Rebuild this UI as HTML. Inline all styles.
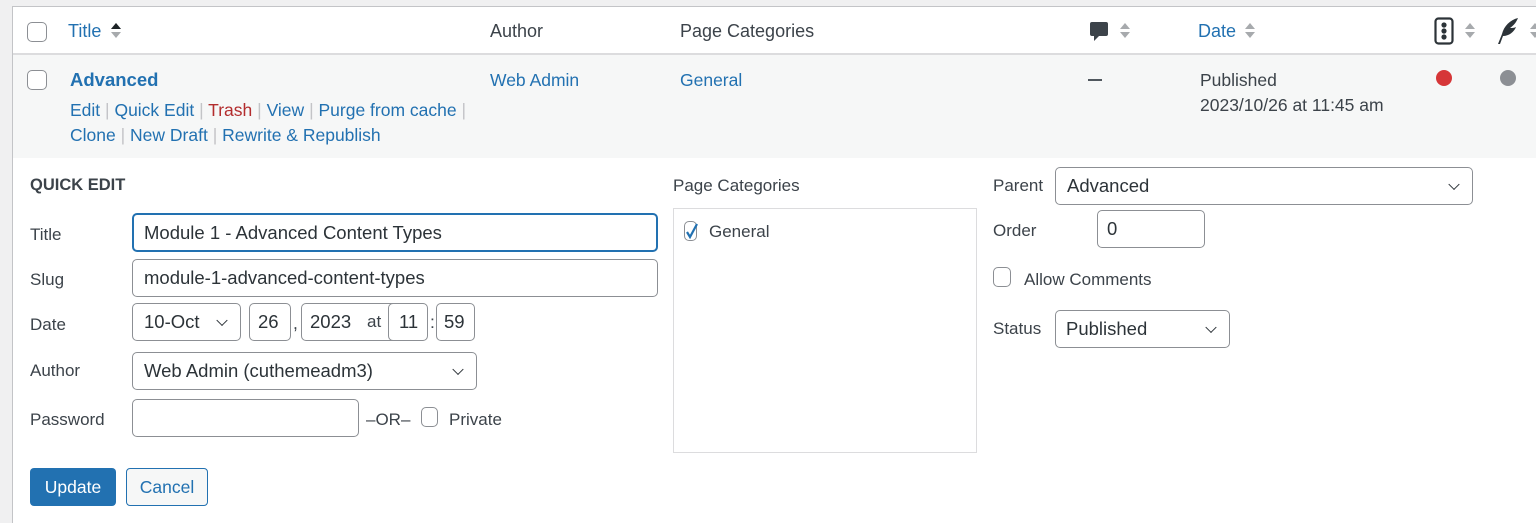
<!DOCTYPE html>
<html><head><meta charset="utf-8"><style>
*{box-sizing:border-box;margin:0;padding:0}
body{width:1536px;height:523px;overflow:hidden;background:#f0f0f1;font-family:"Liberation Sans",sans-serif;color:#3c434a;font-size:17.5px;position:relative}
.a{position:absolute;white-space:nowrap}
.lk{color:#2271b1}
.cb{position:absolute;border:1.5px solid #8c8f94;border-radius:5px;background:#fff}
.in{position:absolute;border:1px solid #8c8f94;border-radius:5px;background:#fff;padding-left:11px;display:flex;align-items:center;color:#2c3338;font-size:18.5px}
.sel::after{content:"";position:absolute;right:14px;top:50%;width:7px;height:7px;border-right:1.6px solid #2c3338;border-bottom:1.6px solid #2c3338;transform:translateY(-70%) rotate(45deg)}
.sort{position:absolute;width:10px;height:18px}
.sort::before,.sort::after{content:"";position:absolute;left:0;border-left:5px solid transparent;border-right:5px solid transparent}
.sort::before{top:1px;border-bottom:6px solid #a7aaad}
.sort::after{top:10px;border-top:6px solid #a7aaad}
.sep{color:#c3c4c7}
.lb{font-size:17px}
</style></head><body>
<div class="a" style="left:12px;top:6px;width:1524px;height:517px;background:#fff;border-left:1px solid #c3c4c7;border-top:1px solid #c3c4c7"></div>
<div class="a" style="left:13px;top:53px;width:1523px;height:2px;background:#dcdcde"></div>
<div class="a" style="left:13px;top:55px;width:1523px;height:103px;background:#f6f7f7"></div>

<div class="cb" style="left:27px;top:22px;width:20px;height:20px"></div>
<div class="a lk" style="left:68px;top:21px;font-size:18px">Title</div>
<div class="sort" style="left:111px;top:22px"></div>
<div class="a" style="left:111px;top:23px;border-left:5px solid transparent;border-right:5px solid transparent;border-bottom:6px solid #1d2327"></div>
<div class="a" style="left:490px;top:21px;font-size:18px">Author</div>
<div class="a" style="left:680px;top:21px;font-size:18px">Page Categories</div>
<svg class="a" style="left:1089px;top:21px" width="20" height="22" viewBox="0 0 20 22"><path d="M3 1h14a2 2 0 0 1 2 2v10a2 2 0 0 1-2 2H10l-5 5v-5H3a2 2 0 0 1-2-2V3a2 2 0 0 1 2-2z" fill="#3c434a"/></svg>
<div class="sort" style="left:1120px;top:22px"></div>
<div class="a lk" style="left:1198px;top:21px;font-size:18px">Date</div>
<div class="sort" style="left:1245px;top:22px"></div>
<svg class="a" style="left:1434px;top:17px" width="20" height="28" viewBox="0 0 20 28"><rect x="1.5" y="1.5" width="17" height="25" rx="3" fill="none" stroke="#2c3338" stroke-width="2.2"/><circle cx="10" cy="8" r="2.6" fill="#2c3338"/><circle cx="10" cy="14" r="2.6" fill="#2c3338"/><circle cx="10" cy="20" r="2.6" fill="#2c3338"/></svg>
<div class="sort" style="left:1465px;top:22px"></div>
<svg class="a" style="left:1496px;top:17px" width="24" height="28" viewBox="0 0 24 28"><path d="M22 1C14 3 8 9 6 17L2 27l2 0 3-8c6 0 11-4 13-9-2 1-4 1-6 1 3-2 6-5 8-10z" fill="#2c3338"/></svg>
<div class="sort" style="left:1530px;top:22px"></div>

<div class="cb" style="left:27px;top:70px;width:20px;height:20px"></div>
<div class="a lk" style="left:70px;top:69px;font-size:18.5px;font-weight:bold">Advanced</div>
<div class="a" style="left:70px;top:100px;font-size:17.5px"><span class="lk">Edit</span> <span class="sep">|</span> <span class="lk">Quick Edit</span> <span class="sep">|</span> <span style="color:#b32d2e">Trash</span> <span class="sep">|</span> <span class="lk">View</span> <span class="sep">|</span> <span class="lk">Purge from cache</span> <span class="sep">|</span></div>
<div class="a" style="left:70px;top:125px;font-size:17.5px"><span class="lk">Clone</span> <span class="sep">|</span> <span class="lk">New Draft</span> <span class="sep">|</span> <span class="lk">Rewrite &amp; Republish</span></div>
<div class="a lk" style="left:490px;top:70px">Web Admin</div>
<div class="a lk" style="left:680px;top:70px">General</div>
<div class="a" style="left:1088px;top:79px;width:14px;height:2px;background:#50575e"></div>
<div class="a" style="left:1200px;top:70px">Published</div>
<div class="a" style="left:1200px;top:95px">2023/10/26 at 11:45 am</div>
<div class="a" style="left:1436px;top:70px;width:16px;height:16px;border-radius:50%;background:#d63638"></div>
<div class="a" style="left:1500px;top:70px;width:16px;height:16px;border-radius:50%;background:#8c8f94"></div>

<div class="a" style="left:30px;top:176px;font-size:16.5px;font-weight:bold">QUICK EDIT</div>
<div class="a lb" style="left:30px;top:225px">Title</div>
<div class="a lb" style="left:30px;top:270px">Slug</div>
<div class="a lb" style="left:30px;top:315px">Date</div>
<div class="a lb" style="left:30px;top:361px">Author</div>
<div class="a lb" style="left:30px;top:410px">Password</div>
<div class="in" style="left:132px;top:213px;width:526px;height:39px;border:2px solid #2271b1;padding-left:10px">Module 1 - Advanced Content Types</div>
<div class="in" style="left:132px;top:259px;width:526px;height:38px">module-1-advanced-content-types</div>
<div class="in sel" style="left:132px;top:303px;width:109px;height:38px">10-Oct</div>
<div class="in" style="left:249px;top:303px;width:42px;height:38px;padding-left:8px">26</div>
<div class="a" style="left:293px;top:313px">,</div>
<div class="in" style="left:301px;top:303px;width:126px;height:38px;padding-left:8px">2023</div>
<div class="a lb" style="left:367px;top:312px">at</div>
<div class="in" style="left:388px;top:303px;width:40px;height:38px;padding-left:10px">11</div>
<div class="a" style="left:430px;top:312px">:</div>
<div class="in" style="left:436px;top:303px;width:39px;height:38px;padding-left:7px">59</div>
<div class="in sel" style="left:132px;top:352px;width:345px;height:38px">Web Admin (cuthemeadm3)</div>
<div class="in" style="left:132px;top:399px;width:227px;height:38px"></div>
<div class="a lb" style="left:366px;top:410px">–OR–</div>
<div class="cb" style="left:421px;top:407px;width:17px;height:20px"></div>
<div class="a lb" style="left:449px;top:410px">Private</div>
<div class="a" style="left:30px;top:468px;width:86px;height:38px;background:#2271b1;border-radius:4px;color:#fff;text-align:center;line-height:39px">Update</div>
<div class="a" style="left:126px;top:468px;width:82px;height:38px;background:#f6f7f7;border:1px solid #2271b1;border-radius:4px;color:#2271b1;text-align:center;line-height:37px">Cancel</div>

<div class="a lb" style="left:673px;top:176px">Page Categories</div>
<div class="a" style="left:673px;top:208px;width:304px;height:245px;border:1px solid #dcdcde"></div>
<div class="cb" style="left:684px;top:221px;width:13px;height:20px"></div>
<svg class="a" style="left:684px;top:222px" width="16" height="18" viewBox="0 0 16 18"><path d="M3 10l3 5 7-13" fill="none" stroke="#2271b1" stroke-width="2.2"/></svg>
<div class="a lb" style="left:709px;top:222px">General</div>

<div class="a lb" style="left:993px;top:176px">Parent</div>
<div class="in sel" style="left:1055px;top:167px;width:418px;height:38px">Advanced</div>
<div class="a lb" style="left:993px;top:221px">Order</div>
<div class="in" style="left:1097px;top:210px;width:108px;height:38px;padding-left:9px">0</div>
<div class="cb" style="left:993px;top:267px;width:18px;height:20px"></div>
<div class="a lb" style="left:1024px;top:270px">Allow Comments</div>
<div class="a lb" style="left:993px;top:319px">Status</div>
<div class="in sel" style="left:1055px;top:310px;width:175px;height:38px;padding-left:10px">Published</div>
</body></html>
